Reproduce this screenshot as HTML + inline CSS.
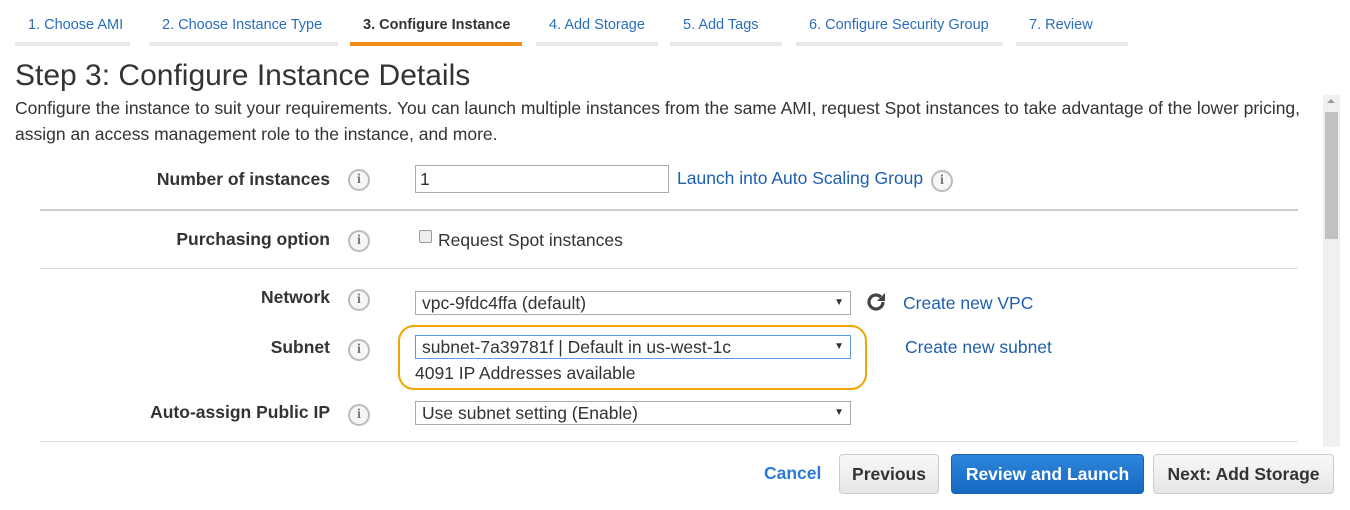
<!DOCTYPE html><html><head><style>
body{margin:0;width:1350px;height:510px;background:#fff;font-family:"Liberation Sans",sans-serif;position:relative;overflow:hidden;color:#333}
.a{position:absolute;white-space:nowrap}
.tab{position:absolute;top:14px;height:28px;border-bottom:4px solid #e9e9e9;font-size:14.5px;color:#2a6ebb;padding-left:13px;line-height:22px;box-sizing:content-box;white-space:nowrap}
.lbl{position:absolute;right:1020px;font-size:17.5px;font-weight:bold;color:#333;white-space:nowrap}
.info{position:absolute;left:348px;width:18px;height:18px;border:2px solid #bbb;border-radius:50%;background:#f6f6f6;color:#777;font:bold 14px "Liberation Serif",serif;text-align:center;line-height:18px}
.sel{position:absolute;left:415px;width:436px;height:22px;border:1px solid #aaa;font-size:17.5px;line-height:22px;padding-left:6px;box-sizing:border-box;color:#333;white-space:nowrap}
.sel:after{content:"▼";position:absolute;right:6px;top:0;font-size:10px;color:#333}
.hr{position:absolute;left:40px;width:1258px;height:1px;background:#ddd}
.lnk{color:#1f5fb0;font-size:17.5px}
.btn{position:absolute;top:454px;height:40px;border:1px solid #ccc;border-radius:4px;background:linear-gradient(#f8f8f8,#e6e6e6);font-weight:bold;font-size:17.5px;color:#333;text-align:center;line-height:38px;box-sizing:border-box;white-space:nowrap}
</style></head><body>
<div class="tab" style="left:15px;width:102px">1. Choose AMI</div>
<div class="tab" style="left:149px;width:176px">2. Choose Instance Type</div>
<div class="tab" style="left:350px;width:159px;border-color:#f0901a;color:#333;font-weight:bold">3. Configure Instance</div>
<div class="tab" style="left:536px;width:109px">4. Add Storage</div>
<div class="tab" style="left:670px;width:99px">5. Add Tags</div>
<div class="tab" style="left:796px;width:194px">6. Configure Security Group</div>
<div class="tab" style="left:1016px;width:99px">7. Review</div>
<div class="a" style="left:15px;top:59px;font-size:30px;color:#333">Step 3: Configure Instance Details</div>
<div class="a" style="left:15px;top:95px;font-size:17.5px;line-height:26px;white-space:normal;width:1305px">Configure the instance to suit your requirements. You can launch multiple instances from the same AMI, request Spot instances to take advantage of the lower pricing, assign an access management role to the instance, and more.</div>
<div class="a" style="left:1323px;top:95px;width:17px;height:352px;background:#f0f0f0"></div>
<div class="a" style="left:1325px;top:112px;width:13px;height:127px;background:#c1c1c1"></div>
<div class="a" style="left:1327px;top:99px;width:0;height:0;border:4px solid transparent;border-bottom:4px solid #999;border-top:0"></div>
<div class="lbl" style="top:169px">Number of instances</div><div class="info" style="top:169px">i</div>
<div class="a" style="left:415px;top:165px;width:254px;height:28px;border:1px solid #aaa;box-sizing:border-box;font-size:17.5px;padding:3px 4px">1</div>
<div class="a lnk" style="left:677px;top:168px">Launch into Auto Scaling Group</div><div class="info" style="top:170px;left:931px">i</div>
<div class="hr" style="top:209px;height:2px;background:#ccc"></div>
<div class="lbl" style="top:229px">Purchasing option</div><div class="info" style="top:230px">i</div>
<div class="a" style="left:419px;top:230px;width:11px;height:11px;border:1px solid #999;border-radius:2px;background:#eee"></div>
<div class="a" style="left:438px;top:230px;font-size:17.5px">Request Spot instances</div>
<div class="hr" style="top:268px"></div>
<div class="lbl" style="top:287px">Network</div><div class="info" style="top:289px">i</div>
<div class="sel" style="top:291px;height:24px">vpc-9fdc4ffa (default)</div>
<svg class="a" style="left:864px;top:290px" width="24" height="24" viewBox="0 0 24 24"><path d="M19 12a7 7 0 1 1-2.2-5.1" fill="none" stroke="#444" stroke-width="3.2"/><path d="M21 3v8h-8z" fill="#444"/></svg>
<div class="a lnk" style="left:903px;top:293px">Create new VPC</div>
<div class="a" style="left:398px;top:325px;width:469px;height:65px;border:2px solid #f0a500;border-radius:16px;box-sizing:border-box"></div>
<div class="lbl" style="top:337px">Subnet</div><div class="info" style="top:339px">i</div>
<div class="sel" style="top:335px;height:24px;border-color:#5b9be0">subnet-7a39781f | Default in us-west-1c</div>
<div class="a" style="left:415px;top:363px;font-size:17.5px">4091 IP Addresses available</div>
<div class="a lnk" style="left:905px;top:337px">Create new subnet</div>
<div class="lbl" style="top:402px">Auto-assign Public IP</div><div class="info" style="top:404px">i</div>
<div class="sel" style="top:401px;height:24px">Use subnet setting (Enable)</div>
<div class="hr" style="top:441px"></div>
<div class="a" style="left:764px;top:463px;font-size:17.5px;font-weight:bold;color:#2a7ad8">Cancel</div>
<div class="btn" style="left:839px;width:100px">Previous</div>
<div class="btn" style="left:951px;width:193px;background:linear-gradient(#2d86dc,#1668c0);border-color:#1a62b0;color:#fff">Review and Launch</div>
<div class="btn" style="left:1153px;width:181px">Next: Add Storage</div>
</body></html>
